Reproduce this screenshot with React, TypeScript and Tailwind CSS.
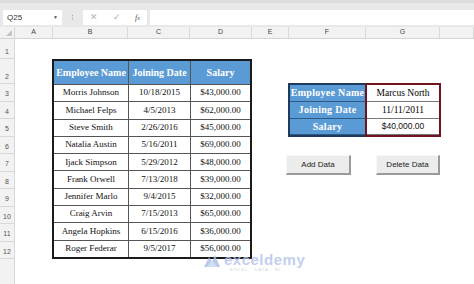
const employees = [
  ["Morris Johnson", "10/18/2015", "$43,000.00"],
  ["Michael Felps", "4/5/2013", "$62,000.00"],
  ["Steve Smith", "2/26/2016", "$45,000.00"],
  ["Natalia Austin", "5/16/2011", "$69,000.00"],
  ["Ijack Simpson", "5/29/2012", "$48,000.00"],
  ["Frank Orwell", "7/13/2018", "$39,000.00"],
  ["Jennifer Marlo", "9/4/2015", "$32,000.00"],
  ["Craig Arvin", "7/15/2013", "$65,000.00"],
  ["Angela Hopkins", "6/15/2016", "$36,000.00"],
  ["Roger Federar", "9/5/2017", "$56,000.00"],
];

const columns = [
  { label: "A", w: "w-[38px]" },
  { label: "B", w: "w-[75px]" },
  { label: "C", w: "w-[62px]" },
  { label: "D", w: "w-[62px]" },
  { label: "E", w: "w-[37px]" },
  { label: "F", w: "w-[77px]" },
  { label: "G", w: "w-[74px]" },
  { label: "", w: "flex-1" },
];

const rowHeights = [
  "h-[20px]",
  "h-[25px]",
  "h-[17.5px]",
  "h-[17.5px]",
  "h-[17.5px]",
  "h-[17.5px]",
  "h-[17.5px]",
  "h-[17.5px]",
  "h-[17.5px]",
  "h-[17.5px]",
  "h-[17.5px]",
  "h-[17.5px]",
];

const FormulaBar = () => (
  <div className="h-[27px] bg-[#e8e8e8] flex items-start pt-[7px] pl-[3px] gap-[3px] border-t-[3px] border-[#dcdcdc]">
    <div className="w-[59px] h-[15px] bg-white flex items-center justify-between px-[4px] text-[8px] text-[#333]">
      <span>Q25</span>
      <span className="text-[5px] text-[#555]">▼</span>
    </div>
    <div className="w-[15px] h-[15px] flex flex-col items-center justify-center gap-[1px]">
      <span className="w-[1px] h-[1px] bg-[#aaa]" />
      <span className="w-[1px] h-[1px] bg-[#aaa]" />
      <span className="w-[1px] h-[1px] bg-[#aaa]" />
    </div>
    <div className="w-[64px] h-[15px] bg-white flex items-center justify-around text-[#b0b0b0] text-[9px]">
      <span>✕</span>
      <span>✓</span>
      <span className="font-['Liberation_Serif'] italic text-[#555] text-[8px]">
        f<span className="text-[6px]">x</span>
      </span>
    </div>
    <div className="flex-1 h-[15px] bg-white" />
  </div>
);

const ColumnHeaders = () => (
  <div className="h-[12px] flex bg-[#f2f2f2] border-b border-[#d4d4d4]">
    <div className="w-[15px] relative border-r border-[#d4d4d4]">
      <div className="absolute right-[2px] bottom-[2px] w-0 h-0 border-l-[6px] border-l-transparent border-b-[6px] border-b-[#c4c4c4]" />
    </div>
    {columns.map((c, i) => (
      <div
        key={i}
        className={`${c.w} flex items-center justify-center text-[7px] text-[#444] border-r border-[#d9d9d9]`}
      >
        {c.label}
      </div>
    ))}
  </div>
);

const MainTable = () => (
  <div className="col-start-3 col-span-3 row-start-2 row-span-11 ml-[-1px] border-2 border-[#1b1b1b] bg-[#555] grid grid-cols-[74px_61px_1fr] grid-rows-[23px_repeat(10,1fr)] gap-px font-['Liberation_Serif']">
    {["Employee Name", "Joining Date", "Salary"].map((h) => (
      <div
        key={h}
        className="bg-[#5b9bd5] text-white font-bold text-[10px] flex items-center justify-center whitespace-nowrap"
      >
        {h}
      </div>
    ))}
    {employees.map((row) =>
      row.map((cell, j) => (
        <div
          key={row[0] + j}
          className="bg-white text-[#111] text-[9px] flex items-center justify-center whitespace-nowrap"
        >
          {cell}
        </div>
      ))
    )}
  </div>
);

const LookupTable = () => (
  <div className="col-start-7 col-span-2 row-start-3 row-span-3 flex mt-[-1px] ml-[-1px] mr-[-1px]">
    <div className="w-[77px] border-2 border-r-0 border-[#1f3a5c] bg-[#2e5a88] grid grid-rows-3 gap-px font-['Liberation_Serif']">
      {["Employee Name", "Joining Date", "Salary"].map((h) => (
        <div
          key={h}
          className="bg-[#5b9bd5] text-white font-bold text-[10px] tracking-[0.3px] flex items-center justify-center whitespace-nowrap"
        >
          {h}
        </div>
      ))}
    </div>
    <div className="flex-1 border-2 border-[#6e1420] bg-[#777] grid grid-rows-3 gap-px">
      <div className="bg-white text-[9.5px] font-['Liberation_Serif'] flex items-center justify-center">
        Marcus North
      </div>
      <div className="bg-white text-[9.5px] font-['Liberation_Serif'] flex items-center justify-center">
        11/11/2011
      </div>
      <div className="bg-white text-[8.5px] text-[#111] flex items-center justify-center">$40,000.00</div>
    </div>
  </div>
);

const Buttons = () => (
  <div className="col-start-6 col-span-3 row-start-7 row-span-2 flex items-start pt-px pl-[34px] gap-[25px]">
    <button className="w-[66px] h-[20px] bg-[#ececec] text-[8px] text-[#222] border-r-2 border-b-2 border-[#9a9a9a] border-t border-l border-t-[#f8f8f8] border-l-[#f8f8f8]">
      Add Data
    </button>
    <button className="w-[65px] h-[20px] bg-[#ececec] text-[8px] text-[#222] border-r-2 border-b-2 border-[#9a9a9a] border-t border-l border-t-[#f8f8f8] border-l-[#f8f8f8]">
      Delete Data
    </button>
  </div>
);

const Watermark = () => (
  <div className="absolute left-[203px] top-[253px] flex items-start gap-[3px] opacity-80">
    <svg width="18" height="14" viewBox="0 0 18 14" className="mt-[1px]">
      <path d="M1 13 L6 3 L9 8 L12 1 L17 13 Z" fill="#a9bce6" />
      <path d="M4 13 L9 6 L14 13 Z" fill="#c8d4f0" />
    </svg>
    <div className="flex flex-col">
      <span className="text-[15px] leading-[14px] font-bold text-[#b3c3ea] tracking-[0.5px]">exceldemy</span>
      <span className="text-[4px] leading-[5px] text-[#c0c8dc] tracking-[1px] ml-[6px]">EXCEL · DATA · BI</span>
    </div>
  </div>
);

const App = () => {
  return (
    <div className="relative w-[474px] h-[284px] bg-white overflow-hidden font-['Liberation_Sans']">
      <FormulaBar />
      <ColumnHeaders />
      <div className="grid grid-cols-[15px_38px_75px_62px_62px_37px_77px_74px_1fr] grid-rows-[20px_25px_repeat(10,17.5px)_1fr] h-[245px]">
        {rowHeights.map((h, i) => (
          <div
            key={i}
            className={`col-start-1 bg-[#f2f2f2] border-r border-b border-[#d9d9d9] flex items-end justify-center pb-[1px] text-[7px] text-[#555] ${h}`}
            style={{ gridRowStart: i + 1 }}
          >
            {i + 1}
          </div>
        ))}
        <div className="col-start-1 row-start-13 bg-[#f2f2f2] border-r border-[#d9d9d9]" />
        <MainTable />
        <LookupTable />
        <Buttons />
      </div>
      <Watermark />
    </div>
  );
};

export default App;
